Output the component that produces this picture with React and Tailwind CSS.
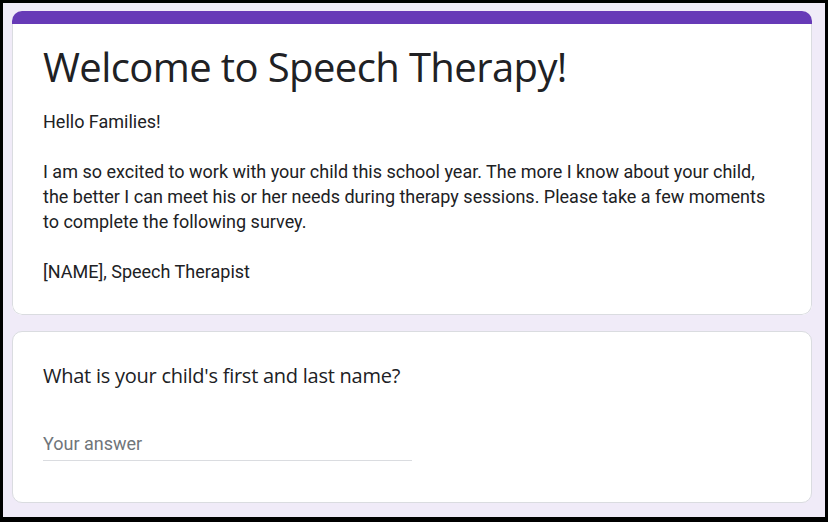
export default function App() {
  const sans = { fontFamily: '"Open Sans", Roboto, sans-serif' };
  const roboto = { fontFamily: 'Roboto, "Liberation Sans", sans-serif' };
  return (
    <div className="w-[828px] h-[522px] bg-black pt-[3px] pl-[3px] pr-[3px] pb-[5px]">
      <div className="h-full bg-[#f0ebf8] pt-[8px] pl-[9px] pr-[13px]">
        <div className="w-[800px] flex flex-col gap-[16px]">
          {/* header card */}
          <div className="rounded-[10px] overflow-hidden bg-white">
            <div className="h-[13px] bg-[#673ab7]"></div>
            <div className="border border-t-0 border-[#dadce0] rounded-b-[10px] pt-[19px] px-[30px] pb-[30px]">
              <h1 className="text-[40px] leading-[48px] tracking-[-0.6px] text-[#202124]" style={sans}>
                Welcome to Speech Therapy!
              </h1>
              <div className="mt-[18px] text-[18px] leading-[25px] text-[#202124] whitespace-pre-wrap" style={roboto}>
                {'Hello Families!\n\nI am so excited to work with your child this school year. The more I know about your child, the better I can meet his or her needs during therapy sessions. Please take a few moments to complete the following survey.\n\n[NAME], Speech Therapist'}
              </div>
            </div>
          </div>

          {/* question card */}
          <div className="rounded-[10px] bg-white border border-[#dadce0] pt-[29px] px-[30px] pb-[41px]">
            <div className="text-[20px] leading-[30px] tracking-[-0.25px] text-[#202124]" style={sans}>
              What is your child's first and last name?
            </div>
            <div className="mt-[40px] w-[369px] border-b border-[#dadce0] pb-[4px]">
              <div className="text-[18px] leading-[25px] text-[#70757a]" style={roboto}>
                Your answer
              </div>
            </div>
          </div>
        </div>
      </div>
    </div>
  );
}
